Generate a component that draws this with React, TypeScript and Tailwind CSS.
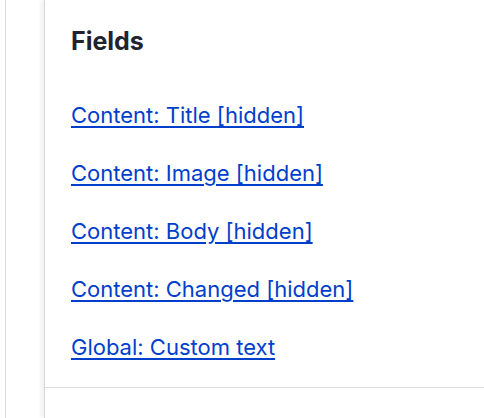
import React from "react";

const links = [
  "Content: Title [hidden]",
  "Content: Image [hidden]",
  "Content: Body [hidden]",
  "Content: Changed [hidden]",
  "Global: Custom text",
];

export default function App() {
  return (
    <div
      className="w-[484px] h-[418px] bg-white flex overflow-hidden"
      style={{ fontFamily: "Inter, 'Noto Sans', sans-serif" }}
    >
      <div className="w-[5px] shrink-0" />
      <div className="w-px shrink-0 bg-[#dcdcdc]" />
      <div className="w-[38px] shrink-0" />
      <div className="flex-1 flex flex-col border-l border-[#d8d8d8] shadow-[-3px_0_4px_rgba(0,0,0,0.06)]">
        <div className="pl-[26px] pt-[25px] pb-[27px] border-b border-[#dddddd]">
          <h2 className="text-[25px] leading-[32px] font-bold text-[#222330]">Fields</h2>
          <ul className="mt-[45px] flex flex-col gap-[32px]">
            {links.map((l) => (
              <li key={l} className="h-[26px]">
                <a
                  href="#"
                  className="text-[22px] leading-[26px] text-[#003ecc] underline decoration-[1.5px] underline-offset-[3px]"
                >
                  {l}
                </a>
              </li>
            ))}
          </ul>
        </div>
      </div>
    </div>
  );
}
